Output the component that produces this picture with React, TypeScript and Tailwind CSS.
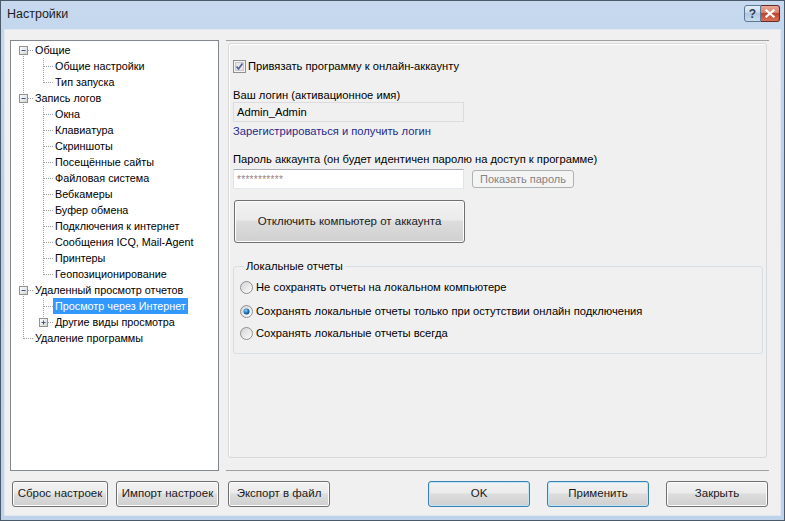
import React from "react";

type V = "none" | "full" | "top" | "bottom";

function Cell({ v, h, exp }: { v: V; h?: boolean; exp?: "minus" | "plus" }) {
  const c = "#a0a0a0";
  return (
    <svg width="20" height="16" className="shrink-0 block">
      {v === "full" && <line x1="10.5" y1="0" x2="10.5" y2="16" stroke={c} strokeDasharray="1 1" />}
      {v === "top" && <line x1="10.5" y1="0" x2="10.5" y2="9" stroke={c} strokeDasharray="1 1" />}
      {v === "bottom" && <line x1="10.5" y1="8" x2="10.5" y2="16" stroke={c} strokeDasharray="1 1" />}
      {h && <line x1="11" y1="8.5" x2="20" y2="8.5" stroke={c} strokeDasharray="1 1" />}
      {exp && (
        <g>
          <defs>
            <linearGradient id="eg" x1="0" y1="0" x2="1" y2="1">
              <stop offset="0" stopColor="#ffffff" />
              <stop offset="1" stopColor="#d4d4d4" />
            </linearGradient>
          </defs>
          <rect x="6.5" y="4.5" width="8" height="8" fill="url(#eg)" stroke="#919191" />
          <line x1="8.5" y1="8.5" x2="12.5" y2="8.5" stroke="#3d5a88" />
          {exp === "plus" && <line x1="10.5" y1="6.5" x2="10.5" y2="10.5" stroke="#3d5a88" />}
        </g>
      )}
    </svg>
  );
}

type Row = { text: string; level: 0 | 1; v0: V; v1?: V; exp?: "minus" | "plus"; sel?: boolean };

const rows: Row[] = [
  { text: "Общие", level: 0, v0: "bottom", exp: "minus" },
  { text: "Общие настройки", level: 1, v0: "full", v1: "full" },
  { text: "Тип запуска", level: 1, v0: "full", v1: "top" },
  { text: "Запись логов", level: 0, v0: "full", exp: "minus" },
  { text: "Окна", level: 1, v0: "full", v1: "full" },
  { text: "Клавиатура", level: 1, v0: "full", v1: "full" },
  { text: "Скриншоты", level: 1, v0: "full", v1: "full" },
  { text: "Посещённые сайты", level: 1, v0: "full", v1: "full" },
  { text: "Файловая система", level: 1, v0: "full", v1: "full" },
  { text: "Вебкамеры", level: 1, v0: "full", v1: "full" },
  { text: "Буфер обмена", level: 1, v0: "full", v1: "full" },
  { text: "Подключения к интернет", level: 1, v0: "full", v1: "full" },
  { text: "Сообщения ICQ, Mail-Agent", level: 1, v0: "full", v1: "full" },
  { text: "Принтеры", level: 1, v0: "full", v1: "full" },
  { text: "Геопозиционирование", level: 1, v0: "full", v1: "top" },
  { text: "Удаленный просмотр отчетов", level: 0, v0: "full", exp: "minus" },
  { text: "Просмотр через Интернет", level: 1, v0: "full", v1: "full", sel: true },
  { text: "Другие виды просмотра", level: 1, v0: "full", v1: "top", exp: "plus" },
  { text: "Удаление программы", level: 0, v0: "top" },
];

function Btn({ children, w, def, cls = "" }: { children: React.ReactNode; w: string; def?: boolean; cls?: string }) {
  return (
    <div
      className={`${w} h-[26px] rounded-[3px] border ${
        def ? "border-[#3c7fb1] shadow-[inset_0_0_0_1px_#bfe6f8]" : "border-[#707070] shadow-[inset_0_0_0_1px_#fcfcfc]"
      } bg-[linear-gradient(#f2f2f2,#ebebeb_45%,#dddddd_50%,#cfcfcf)] flex items-center justify-center text-[11.5px] text-[#1a1a1a] ${cls}`}
    >
      {children}
    </div>
  );
}

function Radio({ on }: { on?: boolean }) {
  return (
    <svg width="13" height="13" className="shrink-0 block">
      <defs>
        <linearGradient id="rg" x1="0" y1="0" x2="1" y2="1">
          <stop offset="0" stopColor="#d2d2d2" />
          <stop offset="1" stopColor="#ffffff" />
        </linearGradient>
        <radialGradient id="rd" cx="0.4" cy="0.35" r="0.7">
          <stop offset="0" stopColor="#8ad2f7" />
          <stop offset="0.6" stopColor="#1e6fb5" />
          <stop offset="1" stopColor="#0d3f78" />
        </radialGradient>
      </defs>
      <circle cx="6.5" cy="6.5" r="6" fill="url(#rg)" stroke="#8e8f8f" />
      {on && <circle cx="6.5" cy="6.5" r="3" fill="url(#rd)" />}
    </svg>
  );
}

export default function App() {
  return (
    <div className="w-[785px] h-[521px] overflow-hidden font-[Liberation_Sans,Arial,sans-serif] bg-[linear-gradient(#c6d9ee,#b9cfe7_40%,#bed3ea)] border border-[#4b5a6b] flex flex-col text-black">
      {/* Title bar */}
      <div className="h-[28px] shrink-0 flex items-start">
        <div className="pl-[6px] pt-[5px] text-[12.5px] leading-[16px] text-[#1e1e1e]">Настройки</div>
        <div className="ml-auto mt-[4px] mr-[4px] flex">
          <div className="w-[17px] h-[17px] rounded-l-[3px] border border-[#5d7796] bg-[linear-gradient(#e6eef7,#c4d5e8_50%,#b2c7df_50%,#c9dbee)] flex items-center justify-center text-[12px] font-bold text-[#2c3e55] leading-none">
            ?
          </div>
          <div className="w-[19px] h-[17px] rounded-r-[3px] border border-l-0 border-[#6b2a22] bg-[linear-gradient(#e9a899,#d57c68_50%,#c2432c_50%,#d7715a)] flex items-center justify-center">
            <svg width="10" height="9">
              <path d="M1.5 1.5 L8.5 7.5 M8.5 1.5 L1.5 7.5" stroke="#ffffff" strokeWidth="2.2" strokeLinecap="square" />
            </svg>
          </div>
        </div>
      </div>

      {/* Client area */}
      <div className="flex-1 mx-[3px] mb-[4px] bg-[#f0f0f0] border border-[#dfe8f2] flex flex-col text-[11.2px]">
        <div className="flex mt-[10px] ml-[5px] h-[431px]">
          {/* Tree */}
          <div className="w-[209px] h-full bg-white border border-[#828790] pl-[2px] pt-[1px] text-[10.8px]">
            {rows.map((r, i) => (
              <div key={i} className="flex h-[16px] items-center">
                {r.level === 0 ? (
                  <Cell v={r.v0} h exp={r.exp} />
                ) : (
                  <>
                    <Cell v={r.v0} />
                    <Cell v={r.v1!} h exp={r.exp} />
                  </>
                )}
                <span
                  className={`px-[2px] h-[16px] leading-[16px] whitespace-nowrap ${
                    r.sel ? "bg-[#3399ff] text-white" : "text-black"
                  }`}
                >
                  {r.text}
                </span>
              </div>
            ))}
          </div>

          {/* Right panel */}
          <div className="ml-[7px] w-[543px] h-full border-t border-b border-t-[#a0a0a0] border-b-[#a0a0a0] flex flex-col">
            <div className="flex-1 mt-[2px] mx-[2px] mb-[12px] rounded-[3px] border border-[#d9d9d9] shadow-[inset_1px_1px_0_#ffffff] pl-[4px] pt-[14px] flex flex-col">
              {/* checkbox */}
              <div className="flex items-center h-[16px]">
                <svg width="13" height="13" className="shrink-0 block">
                  <rect x="0.5" y="0.5" width="12" height="12" fill="#f4f4f4" stroke="#8e8f8f" />
                  <rect x="2.5" y="2.5" width="8" height="8" fill="#e6e6e6" stroke="#c9c9c9" />
                  <path d="M3.5 6.5 L5.5 9 L9.5 3.5" stroke="#4a5f97" strokeWidth="1.6" fill="none" />
                </svg>
                <span className="ml-[2px] leading-[16px]">Привязать программу к онлайн-аккаунту</span>
              </div>

              <div className="mt-[14px] leading-[14px] h-[14px]">Ваш логин (активационное имя)</div>
              <div className="w-[231px] h-[20px] border border-[#dcdcdc] bg-[#f0f0f0] flex items-center pl-[3px] leading-[14px]">
                Admin_Admin
              </div>
              <div className="mt-[2px] leading-[14px] h-[14px] text-[#1e2a8c]">Зарегистрироваться и получить логин</div>

              <div className="mt-[14px] leading-[14px] h-[14px]">
                Пароль аккаунта (он будет идентичен паролю на доступ к программе)
              </div>
              <div className="mt-[3px] flex items-start">
                <div className="w-[231px] h-[20px] border border-[#abadb3] border-b-[#e3e9ef] border-x-[#e2e3ea] bg-white flex items-center pl-[3px] text-[10px] text-[#9a7f7f] tracking-[0.3px]">
                  ***********
                </div>
                <div className="ml-[8px] mt-[1px] w-[102px] h-[18px] rounded-[3px] border border-[#adb2b5] bg-[#f4f4f4] flex items-center justify-center text-[11px] text-[#838383]">
                  Показать пароль
                </div>
              </div>

              <Btn w="w-[231px]" cls="h-[43px]! mt-[11px] ml-[1px]">
                Отключить компьютер от аккаунта
              </Btn>

              <fieldset className="mt-[16px] w-[530px] border border-[#d5dfe5] rounded-[3px] pl-[6px] pb-[12px]">
                <legend className="ml-[4px] px-[2px] leading-[14px]">Локальные отчеты</legend>
                <div className="mt-[6px] flex items-center h-[16px]">
                  <Radio />
                  <span className="ml-[3px]">Не сохранять отчеты на локальном компьютере</span>
                </div>
                <div className="mt-[8px] flex items-center h-[16px]">
                  <Radio on />
                  <span className="ml-[3px]">Сохранять локальные отчеты только при остутствии онлайн подключения</span>
                </div>
                <div className="mt-[6px] flex items-center h-[16px]">
                  <Radio />
                  <span className="ml-[3px]">Сохранять локальные отчеты всегда</span>
                </div>
              </fieldset>
            </div>
          </div>
        </div>

        {/* Bottom buttons */}
        <div className="flex mt-[10px] pl-[7px] pr-[12px]">
          <Btn w="w-[96px]">Сброс настроек</Btn>
          <Btn w="w-[103px]" cls="ml-[8px]">Импорт настроек</Btn>
          <Btn w="w-[102px]" cls="ml-[9px]">Экспорт в файл</Btn>
          <div className="flex-1" />
          <Btn w="w-[102px]" def>OK</Btn>
          <Btn w="w-[102px]" def cls="ml-[17px]">Применить</Btn>
          <Btn w="w-[102px]" cls="ml-[17px]">Закрыть</Btn>
        </div>
      </div>
    </div>
  );
}
